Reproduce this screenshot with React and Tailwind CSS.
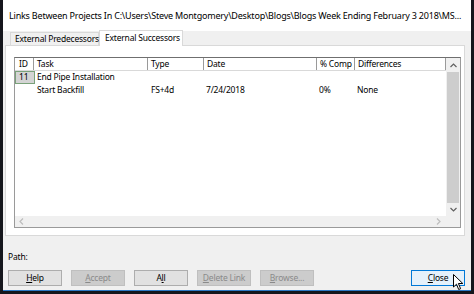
import React from "react";

const cols = [
  { label: "ID", w: "w-[19px]", pl: "pl-[4px]" },
  { label: "Task", w: "w-[114px]", pl: "pl-[3px]" },
  { label: "Type", w: "w-[56px]", pl: "pl-[3px]" },
  { label: "Date", w: "w-[113px]", pl: "pl-[3px]" },
  { label: "% Comp", w: "w-[38px]", pl: "pl-[3px]" },
  { label: "Differences", w: "w-[91px]", pl: "pl-[3px]" },
];

function Btn({ children, disabled, focused }) {
  let cls =
    "w-[54px] h-[16px] flex items-center justify-center border text-[8.5px] tracking-[-0.2px] leading-none whitespace-nowrap ";
  if (focused) cls += "bg-[#e5f1fb] border-[#0078d7] text-black";
  else if (disabled) cls += "bg-[#cccccc] border-[#bfbfbf] text-[#8a8a8a]";
  else cls += "bg-[#e1e1e1] border-[#adadad] text-black";
  return <div className={cls}>{children}</div>;
}

export default function App() {
  return (
    <div className="w-[474px] h-[294px] bg-[#f0f0f0] border-l-[3px] border-r-[3px] border-b-[3px] border-[#15161c] flex flex-col font-['Noto_Sans',sans-serif] text-black relative overflow-hidden">
      {/* title bar */}
      <div className="h-[31px] bg-white flex items-center pl-[6px] pr-[10px] shrink-0">
        <div className="text-[9px] tracking-[-0.2px] whitespace-nowrap flex-1 leading-none">
          Links Between Projects In C:\Users\Steve Montgomery\Desktop\Blogs\Blogs Week Ending February 3 2018\MS...
        </div>
        <svg width="10" height="10" viewBox="0 0 10 10" className="ml-[8px] mr-[1px]">
          <path d="M1 1 L9 9 M9 1 L1 9" stroke="#222" strokeWidth="1" />
        </svg>
      </div>

      {/* body */}
      <div className="flex-1 flex flex-col pl-[2px] pr-[6px] text-[8.5px] tracking-[-0.2px]">
        {/* tabs */}
        <div className="h-[14px] flex items-end pl-[5px] relative z-10">
          <div className="w-[89px] h-[13px] border border-b-0 border-[#d9d9d9] bg-[#f0f0f0] leading-none whitespace-nowrap flex items-center pl-[4px]">
            External Predecessors
          </div>
          <div className="w-[84px] h-[16px] -mb-[1px] border border-b-0 border-[#d9d9d9] bg-white leading-none whitespace-nowrap flex items-center pl-[5px]">
            External Successors
          </div>
        </div>

        {/* panel */}
        <div className="h-[191px] bg-white border border-[#d9d9d9] pl-[8px] pr-[3px] pt-[11px]">
          <div className="w-[447px] h-[171px] border border-[#9a9a9a] border-t-[#6f6f6f] flex flex-col">
            <div className="flex flex-1 min-h-0">
              <div className="flex flex-col">
                {/* header */}
                <div className="flex h-[13px] border-b border-[#d9d9d9]">
                  {cols.map((c) => (
                    <div
                      key={c.label}
                      className={`${c.w} ${c.pl} h-full border-r border-[#9a9a9a] leading-none whitespace-nowrap flex items-center`}
                    >
                      {c.label}
                    </div>
                  ))}
                </div>
                {/* row 1 */}
                <div className="flex h-[13px] leading-none items-center whitespace-nowrap">
                  <div className="w-[20px] h-[13px] bg-[#d4d4d4] border border-[#7aa27a] flex items-center pl-[3px]">
                    11
                  </div>
                  <div className="pl-[2px]">End Pipe Installation</div>
                </div>
                {/* row 2 */}
                <div className="flex h-[13px] leading-none items-center whitespace-nowrap">
                  <div className="w-[19px]" />
                  <div className="w-[114px] pl-[3px]">Start Backfill</div>
                  <div className="w-[56px] pl-[3px]">FS+4d</div>
                  <div className="w-[113px] pl-[2px]">7/24/2018</div>
                  <div className="w-[38px] pl-[2px]">0%</div>
                  <div className="w-[91px] pl-[2px]">None</div>
                </div>
              </div>
              {/* vertical scrollbar */}
              <div className="w-[14px] flex flex-col bg-[#f0f0f0]">
                <div className="h-[14px] flex items-center justify-center">
                  <svg width="7" height="5" viewBox="0 0 7 5">
                    <path d="M0.5 4 L3.5 1 L6.5 4" stroke="#606060" strokeWidth="1.2" fill="none" />
                  </svg>
                </div>
                <div className="flex-1 mx-[1px] bg-[#cdcdcd]" />
                <div className="h-[13px] flex items-center justify-center">
                  <svg width="7" height="5" viewBox="0 0 7 5">
                    <path d="M0.5 1 L3.5 4 L6.5 1" stroke="#606060" strokeWidth="1.2" fill="none" />
                  </svg>
                </div>
              </div>
            </div>
            {/* horizontal scrollbar */}
            <div className="h-[11px] bg-[#f0f0f0] flex items-center justify-between pl-[4px] pr-[19px] shrink-0">
              <svg width="5" height="7" viewBox="0 0 5 7">
                <path d="M4 0.5 L1 3.5 L4 6.5" stroke="#bdbdbd" strokeWidth="1.2" fill="none" />
              </svg>
              <svg width="5" height="7" viewBox="0 0 5 7">
                <path d="M1 0.5 L4 3.5 L1 6.5" stroke="#bdbdbd" strokeWidth="1.2" fill="none" />
              </svg>
            </div>
          </div>
        </div>

        {/* path */}
        <div className="h-[34px] flex items-end pl-[3px] pb-[9px] leading-none">
          Path:
        </div>

        {/* buttons */}
        <div className="flex pl-[3px] gap-[9px]">
          <Btn>
            <span><span className="underline">H</span>elp</span>
          </Btn>
          <Btn disabled>
            <span><span className="underline">A</span>ccept</span>
          </Btn>
          <Btn>
            <span>A<span className="underline">l</span>l</span>
          </Btn>
          <Btn disabled>
            <span><span className="underline">D</span>elete Link</span>
          </Btn>
          <Btn disabled>
            <span><span className="underline">B</span>rowse...</span>
          </Btn>
          <div className="flex-1" />
          <Btn focused>
            <span><span className="underline">C</span>lose</span>
          </Btn>
        </div>
      </div>

      {/* blue bottom accent line */}
      <div className="absolute left-0 right-0 bottom-0 h-[1px] bg-[#2b78c4]" />

      {/* mouse cursor */}
      <svg
        className="absolute left-[450px] top-[274px]"
        width="12"
        height="17"
        viewBox="0 0 12 17"
      >
        <path
          d="M0.5 0.5 L0.5 13 L3.5 10.2 L5.7 15.5 L7.6 14.7 L5.4 9.5 L9.8 9.5 Z"
          fill="white"
          stroke="black"
          strokeWidth="1"
          strokeLinejoin="round"
        />
      </svg>
    </div>
  );
}
